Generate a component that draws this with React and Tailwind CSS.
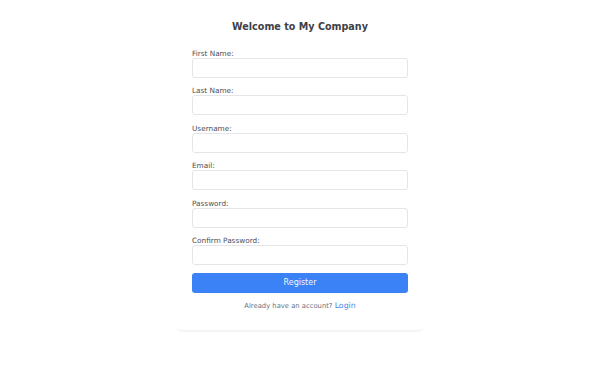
const FIELDS = [
  { label: 'First Name:', type: 'text' },
  { label: 'Last Name:', type: 'text' },
  { label: 'Username:', type: 'text' },
  { label: 'Email:', type: 'email' },
  { label: 'Password:', type: 'password' },
  { label: 'Confirm Password:', type: 'password' },
];

export default function App() {
  return (
    <div className="h-[384px] w-full bg-white flex justify-center font-['DejaVu_Sans',sans-serif]">
      <div className="w-[248px] h-[330px] bg-white rounded-b-md shadow-[0_3px_3px_-2px_rgba(0,0,0,0.08)] px-4 pt-[19.5px]">
        <h1 className="text-[9.6px] leading-[14px] font-bold text-[#3f4147] text-center mb-[15px]">
          Welcome to My Company
        </h1>
        <form onSubmit={(e) => e.preventDefault()}>
          {FIELDS.map((f) => (
            <div key={f.label} className="mb-[8.5px]">
              <label className="block text-[7.3px] leading-[9px] text-[#4b4f56]">{f.label}</label>
              <input
                type={f.type}
                className="block w-full h-[20px] border border-[#e3e5e8] rounded-[3px] bg-white outline-none"
              />
            </div>
          ))}
          <button
            type="submit"
            className="block w-full h-[20px] mt-[-1px] bg-[#3b82f6] rounded-[3px] text-[#f3f6fb] text-[8px] leading-[20px]"
          >
            Register
          </button>
        </form>
        <p className="text-center text-[6.8px] leading-[10px] text-[#6b7280] mt-[8.5px]">
          Already have an account? <a href="#" className="text-[7.8px] text-[#4f86ee]">Login</a>
        </p>
      </div>
    </div>
  );
}
